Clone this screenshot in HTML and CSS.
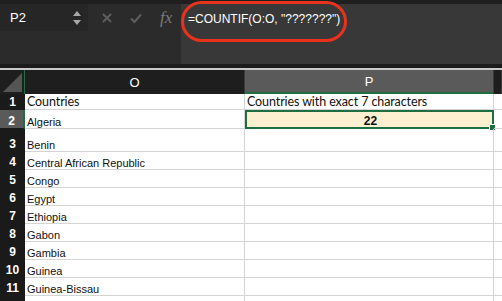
FILE: index.html
```html
<!DOCTYPE html>
<html lang="en">
<head>
<meta charset="UTF-8">
<title>COUNTIF</title>
<link rel="stylesheet" href="styles.css">
</head>
<body>
<div class="app">
  <div class="toolbar">
    <div class="left">
      <div class="namebox">
        <span class="ref">P2</span>
        <span class="spin">
          <svg width="10" height="20" viewBox="0 0 10 20"><path d="M1 8 L5 3 L9 8 Z M1 12 L5 17 L9 12 Z" fill="#a8a8a8"/></svg>
        </span>
      </div>
      <div class="btns">
        <svg class="ico" width="14" height="14" viewBox="0 0 14 14"><path d="M3 3 L11 11 M11 3 L3 11" stroke="#5e5e5e" stroke-width="2"/></svg>
        <svg class="ico" width="14" height="14" viewBox="0 0 14 14"><path d="M2 7.5 L5.5 11 L12 3.5" stroke="#5e5e5e" stroke-width="2" fill="none"/></svg>
        <span class="fx">fx</span>
      </div>
    </div>
    <div class="formula">=COUNTIF(O:O, "???????")</div>
    <div class="mark"></div>
  </div>
  <div class="sep"></div>
  <div class="sheet">
    <div class="hd corner"><span class="tri"></span></div>
    <div class="hd col">O</div>
    <div class="hd col sel">P</div>
    <div class="hd col"></div>

    <div class="rn">1</div>
    <div class="c big">Countries</div>
    <div class="c big">Countries with exact 7 characters</div>
    <div class="c end"></div>

    <div class="rn sel">2</div>
    <div class="c">Algeria</div>
    <div class="c active">22<span class="handle"></span></div>
    <div class="c end"></div>

    <div class="rn">3</div>
    <div class="c">Benin</div>
    <div class="c"></div>
    <div class="c end"></div>

    <div class="rn">4</div>
    <div class="c">Central African Republic</div>
    <div class="c"></div>
    <div class="c end"></div>

    <div class="rn">5</div>
    <div class="c">Congo</div>
    <div class="c"></div>
    <div class="c end"></div>

    <div class="rn">6</div>
    <div class="c">Egypt</div>
    <div class="c"></div>
    <div class="c end"></div>

    <div class="rn">7</div>
    <div class="c">Ethiopia</div>
    <div class="c"></div>
    <div class="c end"></div>

    <div class="rn">8</div>
    <div class="c">Gabon</div>
    <div class="c"></div>
    <div class="c end"></div>

    <div class="rn">9</div>
    <div class="c">Gambia</div>
    <div class="c"></div>
    <div class="c end"></div>

    <div class="rn">10</div>
    <div class="c">Guinea</div>
    <div class="c"></div>
    <div class="c end"></div>

    <div class="rn">11</div>
    <div class="c">Guinea-Bissau</div>
    <div class="c"></div>
    <div class="c end"></div>

    <div class="rn"></div>
    <div class="c"></div>
    <div class="c"></div>
    <div class="c end"></div>
  </div>
</div>
</body>
</html>
```

FILE: styles.css
```css
body {
    margin: 0;
    background: #fff;
    font-family: "Liberation Sans", Arial, sans-serif;
}

.app {
    width: 502px;
    height: 301px;
    overflow: hidden;
}

.toolbar {
    position: relative;
    height: 64px;
    display: flex;
    background: #2b2b2b;
    border-top: 4px solid #1f1f1f;
    box-sizing: border-box;
}

.left {
    width: 181px;
    display: flex;
    align-items: flex-start;
}

.namebox {
    width: 88px;
    height: 27px;
    background: #262626;
    display: flex;
    align-items: center;
    justify-content: space-between;
    padding: 0 6px 0 10px;
    box-sizing: border-box;
}

.ref {
    color: #fff;
    font-size: 13px;
}

.spin svg {
    display: block;
}

.btns {
    flex: 1;
    height: 27px;
    display: flex;
    align-items: center;
    gap: 15px;
    padding-left: 12px;
}

.ico {
    display: block;
}

.fx {
    color: #7a7a7a;
    font-family: "Liberation Serif", serif;
    font-style: italic;
    font-size: 17px;
    margin-left: 2px;
}

.formula {
    flex: 1;
    background: #383838;
    color: #fff;
    font-size: 12px;
    padding: 8px 0 0 7px;
}

.mark {
    position: absolute;
    left: 181px;
    top: -3px;
    width: 166px;
    height: 41px;
    border: 3px solid #e8321c;
    border-radius: 21px;
    box-sizing: border-box;
}

.sep {
    height: 6px;
    background: #1c1c1c;
    border-bottom: 2px solid #c9c9c9;
    box-sizing: border-box;
}

.sheet {
    display: grid;
    grid-template-columns: 25px 220px 249px 8px;
    grid-template-rows: 24px 16px 19px 23px repeat(9, 18px);
    font-size: 11px;
    color: #111;
}

.hd {
    background: #1e1e1e;
    color: #fff;
    font-size: 13px;
    display: flex;
    align-items: center;
    justify-content: center;
    border-right: 1px solid #3a3a3a;
}

.hd.sel {
    background: #5a5a5a;
    border-bottom: 2px solid #1e6e42;
}

.corner {
    position: relative;
    border-right: 1px solid #1e6e42;
}

.tri {
    position: absolute;
    right: 2px;
    bottom: 2px;
    width: 0;
    height: 0;
    border-left: 19px solid transparent;
    border-bottom: 19px solid #555;
}

.rn {
    background: #1a1a1a;
    color: #fff;
    font-weight: bold;
    font-size: 12px;
    display: flex;
    align-items: flex-end;
    justify-content: center;
    border-bottom: 1px solid #1a1a1a;
}

.rn.sel {
    background: #5a5a5a;
    border-right: 2px solid #1e6e42;
}

.c {
    position: relative;
    border-right: 1px solid #d4d4d4;
    border-bottom: 1px solid #d4d4d4;
    display: flex;
    align-items: flex-end;
    padding: 0 0 0 2px;
    white-space: nowrap;
}

.c.big {
    font-size: 12.5px;
    font-family: Lato, "Open Sans", sans-serif;
    letter-spacing: -0.1px;
}

.c.end {
    border-right: none;
}

.active {
    background: #fdf0d0;
    border: 2px solid #1e6e42;
    justify-content: center;
    align-items: center;
    font-weight: bold;
    font-size: 12px;
    padding-top: 2px;
}

.handle {
    position: absolute;
    right: -4px;
    bottom: -4px;
    width: 5px;
    height: 5px;
    background: #1e6e42;
    border: 1px solid #fff;
}
```
